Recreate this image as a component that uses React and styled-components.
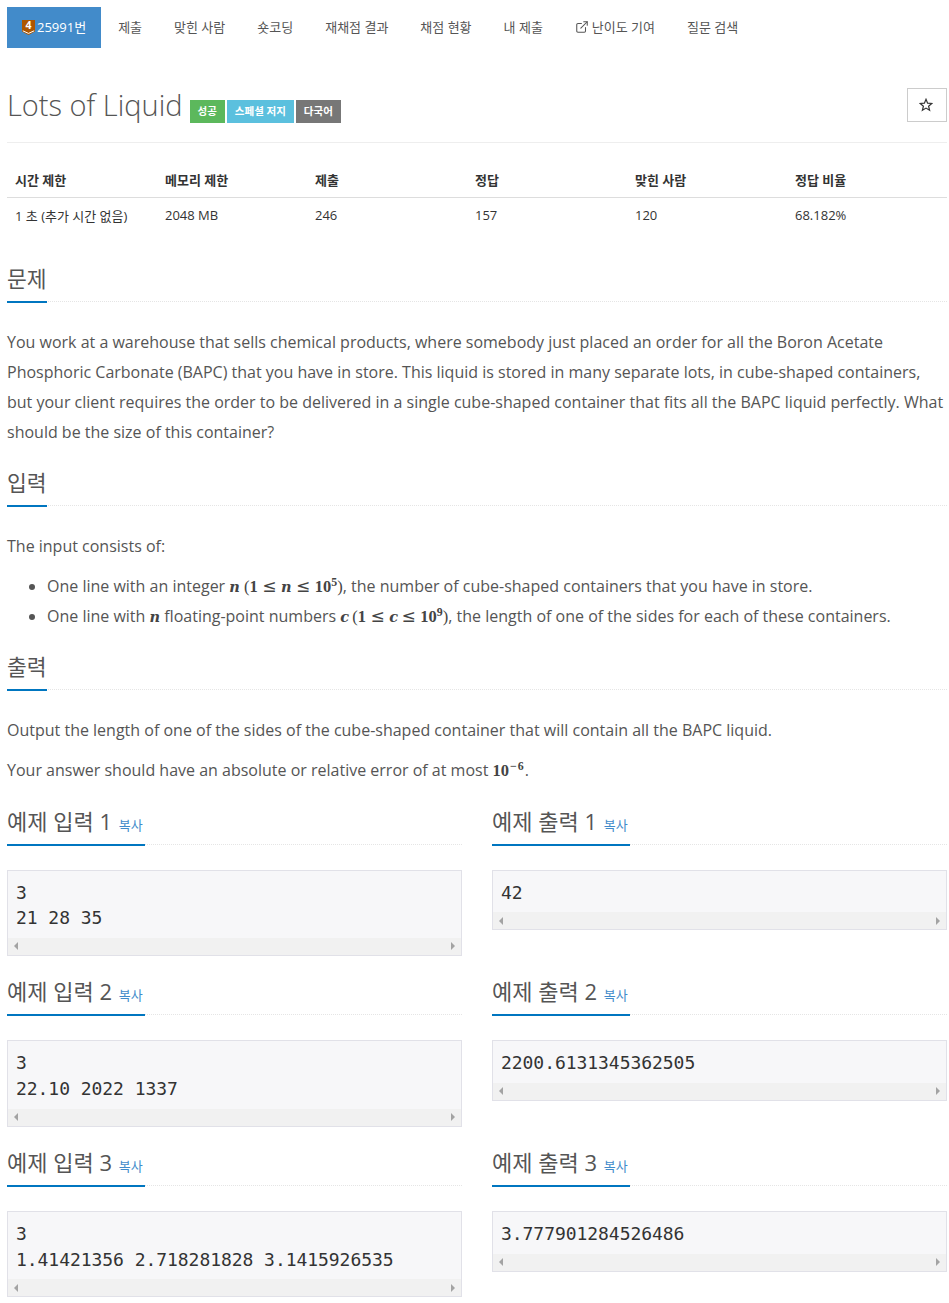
import React from 'react'
import styled, { createGlobalStyle } from 'styled-components'
import { ExternalLink } from 'lucide-react'

const samples = [
  { n: 1, input: '3\n21 28 35', output: '42' },
  { n: 2, input: '3\n22.10 2022 1337', output: '2200.6131345362505' },
  { n: 3, input: '3\n1.41421356 2.718281828 3.1415926535', output: '3.777901284526486' },
]

const navItems = ['제출', '맞힌 사람', '숏코딩', '재채점 결과', '채점 현황', '내 제출']

const stats = [
  ['시간 제한', '1 초 (추가 시간 없음)', 150],
  ['메모리 제한', '2048 MB', 150],
  ['제출', '246', 160],
  ['정답', '157', 160],
  ['맞힌 사람', '120', 160],
  ['정답 비율', '68.182%', 160],
]

const App = () => (
  <Page>
    <GlobalStyle />
    <Nav>
      <ActiveTab>
        <TierBadge />
        25991번
      </ActiveTab>
      {navItems.map(item => (
        <Tab key={item}>{item}</Tab>
      ))}
      <Tab>
        <ExternalLink size={14} strokeWidth={1.8} />난이도 기여
      </Tab>
      <Tab>질문 검색</Tab>
    </Nav>

    <TitleRow>
      <Title>Lots of Liquid</Title>
      <Label color="#5cb85c">성공</Label>
      <Label color="#5bc0de">스페셜 저지</Label>
      <Label color="#777">다국어</Label>
      <StarButton>
        <StarIcon />
      </StarButton>
    </TitleRow>

    <StatsTable>
      <thead>
        <tr>
          {stats.map(([head, , width]) => (
            <Th key={head} width={width}>
              {head}
            </Th>
          ))}
        </tr>
      </thead>
      <tbody>
        <tr>
          {stats.map(([head, value]) => (
            <Td key={head}>{value}</Td>
          ))}
        </tr>
      </tbody>
    </StatsTable>

    <Section>
      <Headline>
        <h2>문제</h2>
      </Headline>
      <Body>
        <p>
          You work at a warehouse that sells chemical products, where somebody just placed an order
          for all the Boron Acetate Phosphoric Carbonate (BAPC) that you have in store. This liquid
          is stored in many separate lots, in cube-shaped containers, but your client requires the
          order to be delivered in a single cube-shaped container that fits all the BAPC liquid
          perfectly. What should be the size of this container?
        </p>
      </Body>
    </Section>

    <Section>
      <Headline>
        <h2>입력</h2>
      </Headline>
      <Body>
        <p>The input consists of:</p>
        <ul>
          <li>
            One line with an integer <Var>n</Var>{' '}
            <MathText>
              (<Num>1</Num>
              <Rel>≤</Rel>
              <Var>n</Var>
              <Rel>≤</Rel>
              <Num>10</Num>
              <sup>5</sup>)
            </MathText>
            , the number of cube-shaped containers that you have in store.
          </li>
          <li>
            One line with <Var>n</Var> floating-point numbers <VarC>c</VarC>{' '}
            <MathText>
              (<Num>1</Num>
              <Rel>≤</Rel>
              <VarC>c</VarC>
              <Rel>≤</Rel>
              <Num>10</Num>
              <sup>9</sup>)
            </MathText>
            , the length of one of the sides for each of these containers.
          </li>
        </ul>
      </Body>
    </Section>

    <Section>
      <Headline>
        <h2>출력</h2>
      </Headline>
      <Body>
        <p>
          Output the length of one of the sides of the cube-shaped container that will contain all
          the BAPC liquid.
        </p>
        <p>
          Your answer should have an absolute or relative error of at most{' '}
          <MathText>
            <Num>10</Num>
            <NegativeSup>−6</NegativeSup>
          </MathText>
          .
        </p>
      </Body>
    </Section>

    <SampleGrid>
      {samples.map(({ n, input, output }) => (
        <React.Fragment key={n}>
          <Sample title={`예제 입력 ${n}`} text={input} />
          <Sample title={`예제 출력 ${n}`} text={output} />
        </React.Fragment>
      ))}
    </SampleGrid>
  </Page>
)

const Sample = ({ title, text }) => (
  <div>
    <SampleHeadline>
      <h2>
        {title} <CopyLink>복사</CopyLink>
      </h2>
    </SampleHeadline>
    <SampleBox>
      <pre>{text}</pre>
      <FakeScrollbar>
        <ArrowLeft />
        <ArrowRight />
      </FakeScrollbar>
    </SampleBox>
  </div>
)

const TierBadge = () => (
  <BadgeSvg viewBox="0 -3 13 18">
    <path d="M0 0h13v11.5L6.5 15 0 11.5z" fill="#ad5600" />
    <path d="M0.8 10.8 6.5 13.4l5.7-2.6" fill="none" stroke="#fff" strokeWidth="1" />
    <text x="6.5" y="9" textAnchor="middle" fontSize="10.5" fontWeight="700" fill="#fff">
      4
    </text>
  </BadgeSvg>
)

const StarIcon = () => (
  <svg width="14" height="14" viewBox="0 0 14 14">
    <path
      d="M7 1.3 8.6 5.2l4.2.3-3.2 2.7 1 4.1L7 10.1l-3.6 2.2 1-4.1-3.2-2.7 4.2-.3z"
      fill="none"
      stroke="#333"
      strokeWidth="1.2"
    />
  </svg>
)

export default App

const GlobalStyle = createGlobalStyle`
  body {
    margin: 0;
    background: #fff;
    font-family: "Open Sans", "Noto Sans CJK KR", sans-serif;
    font-size: 13px;
    color: #555;
  }
`

const Page = styled.div`
  box-sizing: border-box;
  width: 949px;
  padding: 7px 2px 0 7px;
`

const Nav = styled.nav`
  display: flex;
  height: 41px;
`

const Tab = styled.a`
  display: flex;
  align-items: center;
  gap: 3px;
  padding: 0 16px 2px;
  font-size: 13px;
  color: #555;
  white-space: nowrap;
`

const ActiveTab = styled(Tab)`
  gap: 2px;
  margin-right: 1px;
  padding: 0 15px 2px;
  background: #428bca;
  color: #fff;
`

const BadgeSvg = styled.svg`
  width: 13px;
  height: 18px;
  margin-top: -1px;
`

const TitleRow = styled.div`
  display: flex;
  align-items: flex-end;
  gap: 2px;
  margin-top: 40px;
  height: 55px;
  padding-bottom: 19px;
  box-sizing: border-box;
  border-bottom: 1px solid #eee;
  position: relative;
`

const Title = styled.h1`
  margin: 0 5px 2px 0;
  font-size: 29px;
  font-weight: 300;
  line-height: 33px;
  color: #555;
`

const Label = styled.span`
  display: inline-block;
  height: 23px;
  padding: 0 8px;
  background: ${props => props.color};
  color: #fff;
  font-size: 10.5px;
  font-weight: 700;
  line-height: 23px;
  white-space: nowrap;
`

const StarButton = styled.button`
  position: absolute;
  right: 0;
  top: 0;
  box-sizing: border-box;
  width: 40px;
  height: 34px;
  padding: 0 2px 0 0;
  display: flex;
  align-items: center;
  justify-content: center;
  background: #fff;
  border: 1px solid #ccc;
`

const StatsTable = styled.table`
  width: 940px;
  margin: 20px 0 28px;
  border-collapse: collapse;
  table-layout: fixed;
  font-size: 13px;
  color: #333;
`

const Th = styled.th`
  box-sizing: border-box;
  width: ${props => props.width}px;
  height: 34px;
  padding: 0 8px;
  text-align: left;
  font-weight: 700;
  border-bottom: 1px solid #ddd;
`

const Td = styled.td`
  height: 35px;
  padding: 0 8px 2px;
`

const Section = styled.section`
  margin-top: 20px;
`

const Headline = styled.div`
  border-bottom: 1px dotted #e5e5e5;
  height: 38px;

  h2 {
    display: inline-block;
    box-sizing: border-box;
    min-width: 40px;
    height: 40px;
    margin: 0;
    font-size: 21.5px;
    font-weight: 400;
    line-height: 32px;
    color: #555;
    border-bottom: 2px solid #0076c0;
  }
`

const SampleHeadline = styled(Headline)`
  h2 {
    font-size: 22px;
    line-height: 31px;
  }
`

const Body = styled.div`
  margin-top: 25px;
  font-size: 16px;
  line-height: 30px;
  color: #555;

  p {
    margin: 0 0 10px;
  }

  ul {
    margin: 0 0 10px;
    padding-left: 40px;
  }
`

const MathText = styled.span`
  font-family: "Liberation Serif", serif;
  font-size: 16.5px;
  line-height: 1;
  color: #444;

  sup {
    position: relative;
    top: -0.45em;
    vertical-align: baseline;
    font-size: 72%;
    font-weight: 700;
    line-height: 0;
  }
`

const NegativeSup = styled.sup`
  margin-left: 1px;
  letter-spacing: 1px;
`

const Num = styled.span`
  font-size: 16.5px;
  font-weight: 700;
  line-height: 1;
`

const Rel = styled.span`
  margin: 0 4.5px;
  font-family: "DejaVu Sans", sans-serif;
  font-size: 17px;
  line-height: 1;
  color: #444;
`

const Var = styled.i`
  font-family: "DejaVu Serif", serif;
  font-size: 14.5px;
  font-weight: 700;
  line-height: 1;
  color: #444;
`

const VarC = styled(Var)`
  letter-spacing: -1px;
`

const SampleGrid = styled.div`
  display: grid;
  grid-template-columns: 455px 455px;
  column-gap: 30px;
  row-gap: 20.3px;
  align-items: start;
  margin-top: 21px;
`

const CopyLink = styled.a`
  margin: 0 2px 0 1px;
  font-size: 13px;
  color: #428bca;
`

const SampleBox = styled.div`
  margin-top: 25px;
  border: 1px solid #e1e1e8;
  background: #f7f7f9;

  pre {
    margin: 0;
    padding: 9px 8px 7px;
    font-family: "DejaVu Sans Mono", monospace;
    font-size: 18px;
    letter-spacing: -0.05px;
    line-height: 25.7px;
    color: #333;
  }
`

const FakeScrollbar = styled.div`
  display: flex;
  align-items: center;
  justify-content: space-between;
  height: 17px;
  padding: 0 6px;
  background: #f1f1f1;
`

const ArrowLeft = styled.span`
  width: 0;
  height: 0;
  border-top: 4px solid transparent;
  border-bottom: 4px solid transparent;
  border-right: 4px solid #a3a3a3;
`

const ArrowRight = styled.span`
  width: 0;
  height: 0;
  border-top: 4px solid transparent;
  border-bottom: 4px solid transparent;
  border-left: 4px solid #a3a3a3;
`
